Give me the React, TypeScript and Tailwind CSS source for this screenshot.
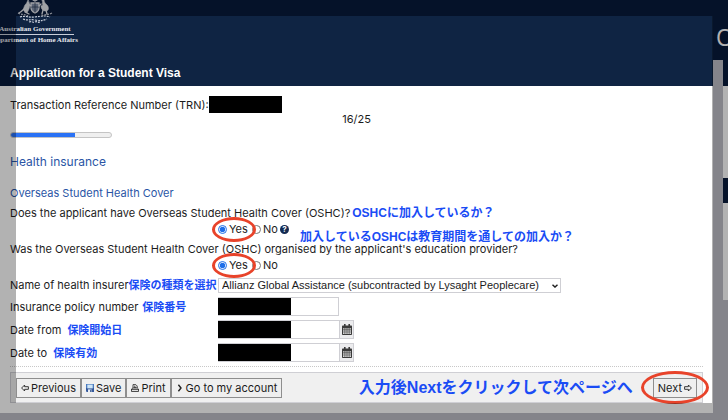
import { ReactNode } from "react";
import clsx from "clsx";

const Note = ({
  children,
  className = "text-[11px]",
}: {
  children: ReactNode;
  className?: string;
}) => (
  <span
    className={clsx(
      "whitespace-nowrap font-['Liberation_Sans','Noto_Sans_CJK_JP',sans-serif] font-bold text-[#1a4cf5]",
      className,
    )}
  >
    {children}
  </span>
);

const Ring = ({ className }: { className: string }) => (
  <span
    className={clsx(
      "pointer-events-none absolute rounded-[50%] border-3 border-[#e8432a]",
      className,
    )}
  />
);

const Crest = () => (
  <svg className="block h-[24px] w-[36px]" viewBox="0 0 36 24" fill="none">
    <g stroke="#e6e8ee" strokeWidth="1.3" strokeLinecap="round">
      <path d="M14 3h8v5c0 3-2 4-4 5-2-1-4-2-4-5z" fill="#8390aa" />
      <path d="M18 3v9M14 7h8" stroke="#33415e" strokeWidth=".8" />
      <path d="M16 0l2 1 2-1" />
      <path
        d="M11 0c-1 2-1 3-3 5-1 2-2 4-1 6l3 2 2-4 1-4z"
        fill="#e6e8ee"
        strokeWidth=".6"
      />
      <path d="M7 9c-2 2-3 3-5 4M8 12l4 2M11 4l3 2" />
      <path
        d="M25 0c1 2 0 4 1 5l-2 1c0 3 2 5 5 5s3-4 1-6-3-3-3-5z"
        fill="#e6e8ee"
        strokeWidth=".6"
      />
      <path d="M26 10l-1 4M29 10l1 4M24 4l-2 2" />
    </g>
    <g stroke="#c6ccd8" strokeWidth="1.2" strokeDasharray="2 1">
      <path d="M1 13c4 2 7 1 10 3M35 13c-4 2-7 1-10 3" />
      <path d="M3 17c5-2 8 1 15 0s10-2 15 0" />
      <path d="M6 19c5 2 7 0 12 1s7 1 12-1" />
      <path d="M12 22c3-1 4 1 6 0s3 1 6 0" />
    </g>
  </svg>
);

const ArrowIcon = ({ className }: { className?: string }) => (
  <svg
    className={clsx("h-2 w-2 shrink-0", className)}
    viewBox="0 0 8 8"
    fill="none"
    stroke="#222"
    strokeWidth=".9"
    strokeLinejoin="round"
  >
    <path d="M.6 4L3.6 1v1.7h3.8v2.6H3.6V7z" />
  </svg>
);

const SaveIcon = () => (
  <svg className="h-2 w-2 shrink-0" viewBox="0 0 8 8">
    <path d="M0 0h8v8H1L0 7z" fill="#4a7abf" />
    <path d="M0 4h8v4H1L0 7z" fill="#35599b" />
    <path d="M1.3 .6h5.4v3.8H1.3z" fill="#cfe6f7" />
    <path d="M2 5.4h3.6V8H2z" fill="#e8eef8" />
    <path d="M4.2 5.8h1.1V8H4.2z" fill="#274a86" />
  </svg>
);

const PrintIcon = () => (
  <svg
    className="h-2 w-2 shrink-0"
    viewBox="0 0 8 8"
    fill="none"
    stroke="#222"
    strokeWidth=".8"
  >
    <path d="M2 4V.6h2.8L6.2 2v2M3 2.2h1.4M3 3.4h2.2" />
    <path d="M.5 7.5V5L2 4h4.2l1.3 1v2.5zM.5 5.6h7" />
  </svg>
);

const ChevronIcon = () => (
  <svg
    className="h-2 w-2 shrink-0"
    viewBox="0 0 8 8"
    fill="none"
    stroke="#222"
    strokeWidth="1.4"
  >
    <path d="M2.4 .8L5 4 2.4 7.2" />
  </svg>
);

const CalendarIcon = () => (
  <svg className="h-[11px] w-[10px]" viewBox="0 0 10 11">
    <path
      d="M0 2.6C0 2 .4 1.6 1 1.6h8c.6 0 1 .4 1 1V10c0 .6-.4 1-1 1H1c-.6 0-1-.4-1-1z"
      fill="#3a3a3a"
    />
    <path d="M2 0h1.6v3H2zM6.4 0H8v3H6.4z" fill="#3a3a3a" />
    <path
      d="M1 4.2h1.6v1.4H1zM3.2 4.2h1.5v1.4H3.2zM5.3 4.2h1.5v1.4H5.3zM7.4 4.2H9v1.4H7.4zM1 6.2h1.6v1.5H1zM3.2 6.2h1.5v1.5H3.2zM5.3 6.2h1.5v1.5H5.3zM7.4 6.2H9v1.5H7.4zM1 8.3h1.6v1.6H1zM3.2 8.3h1.5v1.6H3.2zM5.3 8.3h1.5v1.6H5.3zM7.4 8.3H9v1.6H7.4z"
      fill="#d8d8d8"
    />
  </svg>
);

const YesNo = ({ name, help }: { name: string; help?: boolean }) => (
  <div
    className="relative ml-[208px] flex h-4 items-center"
    role="radiogroup"
    aria-label={name}
  >
    <label className="flex w-[34px] items-center gap-0.5">
      <input
        className="size-[9px] shrink-0 accent-[#1f6fe8]"
        defaultChecked={true}
        name={name}
        type="radio"
      />
      Yes
    </label>
    <label className="flex items-center gap-0.5">
      <input
        className="size-[9px] shrink-0 accent-[#1f6fe8]"
        name={name}
        type="radio"
      />
      No
    </label>
    {help && (
      <button
        className="ml-0.5 flex size-[9px] items-center justify-center rounded-full bg-[#132a52] text-[8px] leading-none font-bold text-white"
        type="button"
      >
        ?
      </button>
    )}
    <Ring className="-top-1 -left-1.5 h-[25px] w-[44px]" />
  </div>
);

const DateRow = ({
  id,
  label,
  note,
}: {
  id: string;
  label: string;
  note: string;
}) => (
  <div className="flex h-[19px] items-center">
    <div className="flex w-[208px] items-center gap-1.5">
      <label htmlFor={id}>{label}</label>
      <Note>{note}</Note>
    </div>
    <div className="relative flex h-[19px]">
      <input
        className="w-[122px] border border-[#cfcfd4] bg-white px-1"
        id={id}
        type="text"
      />
      <span className="absolute inset-y-0 left-0 my-px w-[73px] bg-black" />
      <button
        className="flex w-3.5 items-center justify-center border border-l-0 border-[#cfcfd4] bg-[#ececee]"
        aria-label={`Choose ${label.toLowerCase()}`}
        type="button"
      >
        <CalendarIcon />
      </button>
    </div>
  </div>
);

const ToolButton = ({ children }: { children: ReactNode }) => (
  <button
    className="flex h-5 items-center gap-0.5 border border-[#8e8e8e] bg-[#efefef] px-1 whitespace-nowrap"
    type="button"
  >
    {children}
  </button>
);

const App = () => {
  return (
    <div className="relative flex min-h-screen overflow-hidden bg-[#bdbdc6] font-['Inter','Noto_Sans_CJK_JP',sans-serif] text-[11px] leading-4 text-[#1c1c1c]">
      <div className="min-w-0 flex-1 pb-[7px]">
        <header className="h-[86px] bg-[#081a3b] text-white">
          <div className="relative ml-4 h-full border-t-16 border-[#081a3b] bg-[#0f2443]">
            <div className="absolute -top-4 -left-5 flex w-[78px] flex-col items-center font-['Liberation_Serif',serif] text-[7px] leading-[10px] font-bold whitespace-nowrap text-[#e6e8ee]">
              <Crest />
              <span className="w-full border-b border-[#c9ced9] text-center">
                Australian Government
              </span>
              <span>Department of Home Affairs</span>
            </div>
            <h1 className="-ml-1.5 pt-[49px] font-['Liberation_Sans',sans-serif] text-[12px] leading-4 font-bold">
              Application for a Student Visa
            </h1>
          </div>
        </header>

        <main className="bg-white p-[10px]">
          <div className="flex items-center">
            Transaction Reference Number (TRN):
            <span className="h-[17px] w-[73px] bg-black" />
          </div>
          <p className="-mt-0.5 text-center">16/25</p>
          <div
            className="mt-[5px] h-[6px] w-[102px] overflow-hidden rounded-full border border-[#c4c4c4] bg-[#efefef]"
            role="progressbar"
            aria-valuenow={16}
            aria-valuemax={25}
          >
            <div
              className="h-full bg-[#2a72f5]"
              style={{ width: `${(16 / 25) * 100}%` }}
            />
          </div>
          <h2 className="mt-4 text-[12px] leading-4 text-[#2a55a5]">
            Health insurance
          </h2>
          <h3 className="mt-[15px] text-[#2a55a5]">
            Overseas Student Health Cover
          </h3>

          <form className="mt-1">
            <div className="flex gap-0.5">
              <p>
                Does the applicant have Overseas Student Health Cover (OSHC)?
              </p>
              <Note className="text-[12px]">OSHCに加入しているか？</Note>
            </div>
            <YesNo name="hasCover" help={true} />
            <div className="relative mt-1">
              <p>
                Was the Overseas Student Health Cover (OSHC) organised by the
                applicant's education provider?
              </p>
              <Note className="absolute -top-3 left-[290px] text-[12px]">
                加入しているOSHCは教育期間を通しての加入か？
              </Note>
            </div>
            <YesNo name="organisedByProvider" />

            <div className="mt-1 flex items-center">
              <div className="flex w-[208px] items-center whitespace-nowrap">
                <label htmlFor="insurer">Name of health insurer</label>
                <Note>保険の種類を選択</Note>
              </div>
              <div className="relative">
                <select
                  className="block h-[15px] w-[343px] appearance-none border border-[#cfcfd4] bg-white pl-[3px] font-['Liberation_Sans',sans-serif] leading-3"
                  id="insurer"
                >
                  <option>
                    Allianz Global Assistance (subcontracted by Lysaght
                    Peoplecare)
                  </option>
                </select>
                <svg
                  className="pointer-events-none absolute top-[6px] right-[3px] h-1 w-[6px]"
                  viewBox="0 0 6 4"
                  fill="none"
                  stroke="#222"
                  strokeWidth="1.4"
                >
                  <path d="M.5 .7L3 3.1 5.5 .7" />
                </svg>
              </div>
            </div>
            <div className="mt-1 flex items-center">
              <div className="flex w-[208px] items-center gap-1">
                <label htmlFor="policy">Insurance policy number</label>
                <Note>保険番号</Note>
              </div>
              <div className="relative flex h-[19px]">
                <input
                  className="w-[121px] border border-[#cfcfd4] bg-white px-1"
                  id="policy"
                  type="text"
                />
                <span className="absolute inset-y-0 left-0 my-px w-[73px] bg-black" />
              </div>
            </div>
            <div className="mt-1 space-y-1">
              <DateRow id="dateFrom" label="Date from" note="保険開始日" />
              <DateRow id="dateTo" label="Date to" note="保険有効" />
            </div>

            <div className="mt-1 border-t border-dotted border-[#c8c8c8] pt-[5px]">
              <div className="flex h-[31px] items-center border border-[#cfcfd4] bg-[#f0f0f0] px-[5px]">
                <ToolButton>
                  <ArrowIcon />
                  Previous
                </ToolButton>
                <ToolButton>
                  <SaveIcon />
                  Save
                </ToolButton>
                <ToolButton>
                  <PrintIcon />
                  Print
                </ToolButton>
                <ToolButton>
                  <ChevronIcon />
                  Go to my account
                </ToolButton>
                <Note className="mr-5 ml-auto text-[16px]">
                  入力後Nextをクリックして次ページへ
                </Note>
                <div className="relative">
                  <ToolButton>
                    Next
                    <ArrowIcon className="rotate-180" />
                  </ToolButton>
                  <Ring className="-top-[7px] -left-3 h-[33px] w-[68px]" />
                </div>
              </div>
            </div>
          </form>
        </main>
      </div>

      <aside className="flex w-[15px] flex-col">
        <div className="h-[60px] overflow-hidden bg-[#081a3b] pt-[26px] pl-[3px] font-['Open_Sans',sans-serif] text-[23px] leading-[22px] text-white">
          O
        </div>
        <div className="ml-[10px] h-[26px] bg-[#081a3b]" />
        <div className="ml-[10px] h-[92px] bg-white" />
        <div className="ml-[10px] h-[25px] bg-[#081a3b]" />
        <div className="ml-[10px] h-[97px] bg-white" />
      </aside>

      {/* dims everything outside the highlighted panel */}
      <div className="pointer-events-none absolute top-4 right-4 bottom-[17px] left-4 shadow-[0_0_0_2000px_rgb(0_0_0/0.3)]" />
    </div>
  );
};

export default App;
